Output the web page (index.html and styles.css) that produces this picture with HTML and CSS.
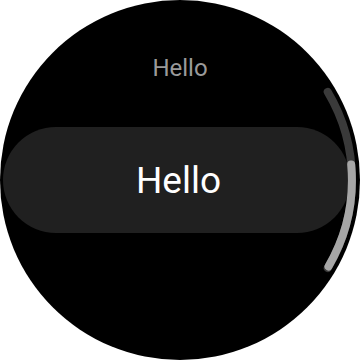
FILE: index.html
```html
<!DOCTYPE html>
<html lang="en">
<head>
    <meta charset="UTF-8">
    <meta name="viewport" content="width=device-width, initial-scale=1.0">
    <title>Hello list</title>
    <link rel="stylesheet" href="styles.css">
</head>
<body>

    <div class="watch">
        <!-- list of items, the selected one sits in the middle -->
        <div class="list">
            <div class="item-small">Hello</div>
            <div class="item-selected">Hello</div>
        </div>

        <!-- round scroll indicator on the right edge -->
        <svg class="scrollbar" width="360" height="360" viewBox="0 0 360 360">
            <path class="track" d="M 327.7 91.9 A 172 172 0 0 1 327.7 268.1"/>
            <path class="thumb" d="M 351.2 164.5 A 172 172 0 0 1 328.5 266.5"/>
        </svg>
    </div>

</body>
</html>
```

FILE: styles.css
```css
body {
    margin: 0;
    background-color: #ffffff;
    font-family: Roboto, "Noto Sans", sans-serif;
}
.watch {
    position: relative;
    width: 360px;
    height: 360px;
    border-radius: 50%;
    background-color: #000000;
    overflow: hidden;
}
.list {
    display: flex;
    flex-direction: column;
    align-items: center;
    padding-top: 50px;
}
.item-small {
    height: 36px;
    line-height: 36px;
    font-size: 24px;
    color: #9a9a9a;
}
.item-selected {
    align-self: stretch;
    margin: 41px 10px 0 3px;
    height: 106px;
    border-radius: 53px;
    background-color: #202020;
    color: #ffffff;
    font-size: 37px;
    padding-left: 4px;
    display: flex;
    align-items: center;
    justify-content: center;
}
.scrollbar {
    position: absolute;
    left: 0;
    top: 0;
}
.scrollbar path {
    fill: none;
    stroke-width: 8;
    stroke-linecap: round;
}
.track {
    stroke: #3a3a3a;
}
.thumb {
    stroke: #a6a6a6;
}
```
